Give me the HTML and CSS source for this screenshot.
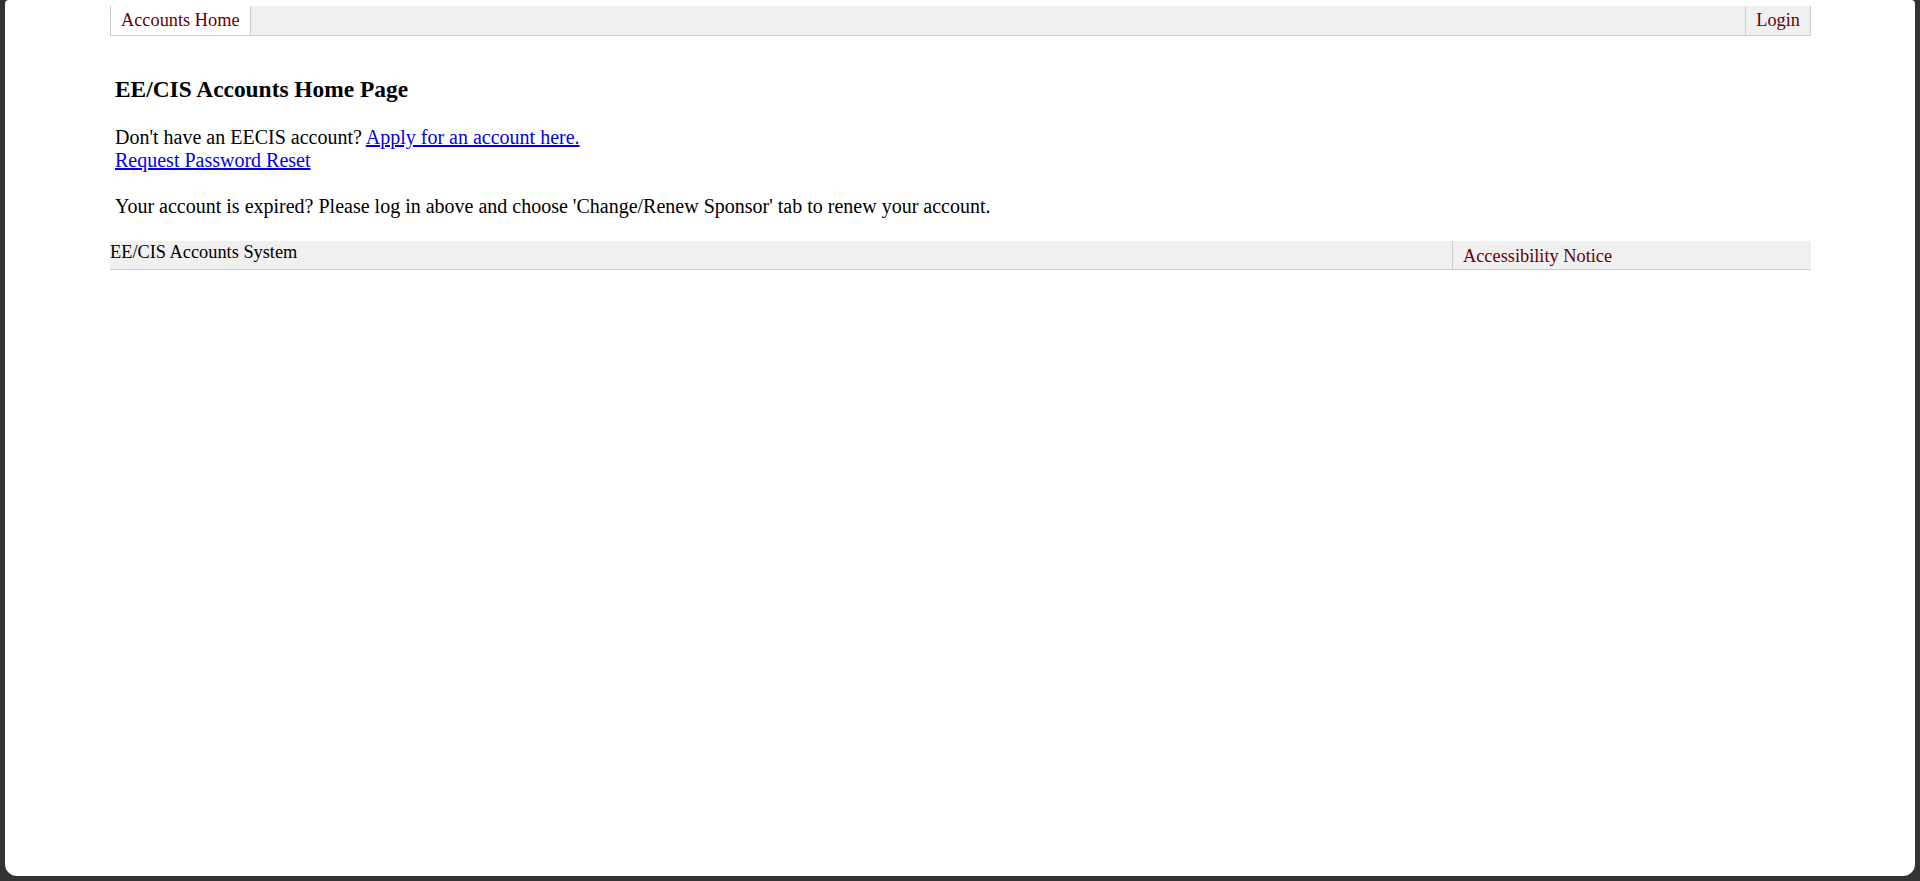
FILE: index.html
```html
<!DOCTYPE html>
<html lang="en">
<head>
<meta charset="utf-8">
<title>EE/CIS Accounts Home Page</title>
<link rel="stylesheet" href="styles.css">
</head>
<body>
<div class="window">
  <div class="page">
    <div class="nav">
      <a class="nav-item nav-home" href="#">Accounts Home</a>
      <span class="nav-fill"></span>
      <a class="nav-item nav-login" href="#">Login</a>
    </div>
    <div class="content">
      <h3 class="title">EE/CIS Accounts Home Page</h3>
      <p class="para">Don't have an EECIS account? <a class="link" href="#">Apply for an account here.</a><br><a class="link" href="#">Request Password Reset</a></p>
      <p class="para para-gap">Your account is expired? Please log in above and choose 'Change/Renew Sponsor' tab to renew your account.</p>
    </div>
    <div class="footer">
      <div class="footer-left">EE/CIS Accounts System</div>
      <a class="footer-right" href="#">Accessibility Notice</a>
    </div>
  </div>
</div>
</body>
</html>
```
FILE: styles.css
```css
html, body {
  margin: 0;
  padding: 0;
  background: #333333;
  height: 881px;
  overflow: hidden;
}

body {
  font-family: "Liberation Serif", "Times New Roman", serif;
  color: #000;
}

.window {
  margin: 0 5px;
  height: 876px;
  background: #ffffff;
  border-radius: 4px 4px 12px 12px;
  padding: 0 104px 0 105px;
  box-sizing: border-box;
}

.page {
  padding-top: 6px;
}

.nav {
  display: flex;
  background: #f0f0f0;
  border-bottom: 1px solid #cccccc;
  font-size: 18.33px;
  line-height: 21px;
}

.nav-item {
  color: #660000;
  text-decoration: none;
  padding: 4px 10px 4px 10px;
  border-right: 1px solid #cccccc;
}

.nav-home {
  background: #ffffff;
  border-left: 1px solid #cccccc;
}

.nav-fill {
  flex: 1;
}

.nav-login {
  border-left: 1px solid #cccccc;
}

.content {
  padding: 0 5px;
}

.title {
  font-size: 23.4px;
  line-height: 27px;
  font-weight: bold;
  margin: 40px 0 0 0;
}

.para {
  font-size: 20px;
  line-height: 23px;
  margin: 23px 0 0 0;
}

.para-gap {
  margin-top: 23px;
}

.link {
  color: #0000ee;
  text-decoration: underline;
}

.footer {
  display: flex;
  align-items: flex-start;
  margin-top: 23px;
  height: 28px;
  background: #f0f0f0;
  border-bottom: 1px solid #cccccc;
  font-size: 18.33px;
  line-height: 21px;
}

.footer-left {
  flex: 1;
  padding-top: 1px;
  color: #000;
}

.footer-right {
  width: 338px;
  height: 23px;
  padding: 5px 10px 0 10px;
  border-left: 1px solid #cccccc;
  color: #660000;
  text-decoration: none;
}
```
